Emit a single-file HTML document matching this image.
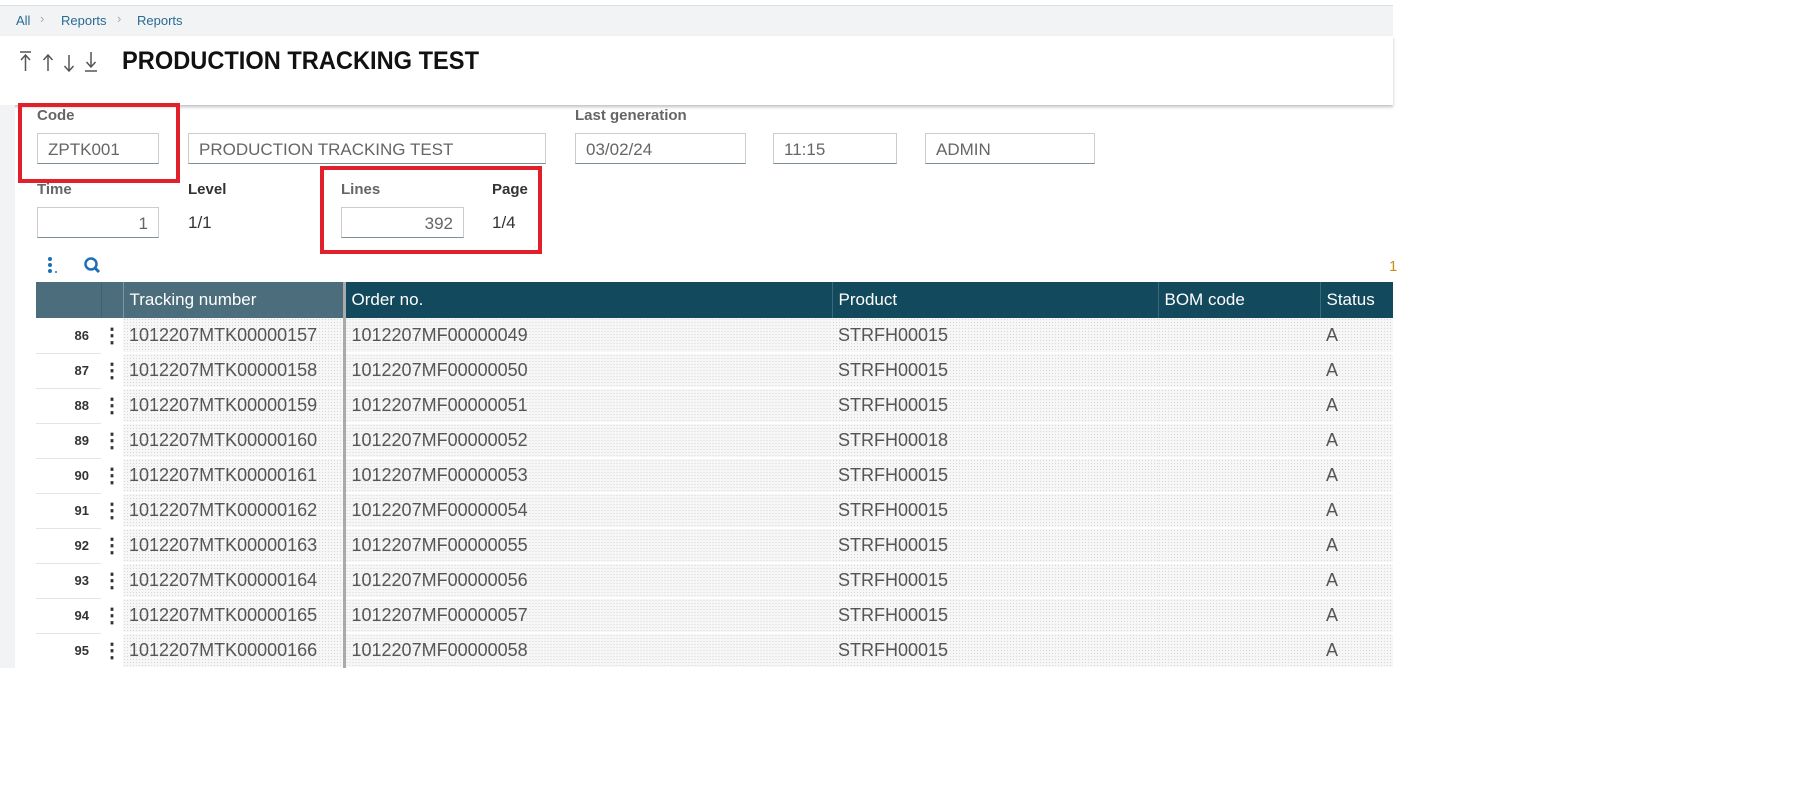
<!DOCTYPE html>
<html><head><meta charset="utf-8"><style>
*{margin:0;padding:0;box-sizing:border-box}
body{width:1803px;height:801px;background:#fff;font-family:"Liberation Sans",sans-serif;position:relative;overflow:hidden}
.a{position:absolute}
.bc{left:0;top:5px;width:1393px;height:31px;background:#f1f3f4;border-top:1px solid #dde0e2;font-size:13px;color:#2a6a93}
.hdr{left:0;top:36px;width:1393px;height:69px;background:#fff;box-shadow:0 2px 3px rgba(0,0,0,.25)}
.lbl{font-size:15px;font-weight:bold;color:#666}
.inp{border:1px solid #ccc;border-bottom:1px solid #7d8f99;height:31px;font-size:17px;color:#666;padding:6px 10px;background:#fff}
.red{border:4px solid #e0202a}
.val{font-size:17px;color:#333}
table{border-collapse:collapse;position:absolute;left:36px;top:282px;width:1357px;table-layout:fixed}
th{height:36px;background:#12495c;color:#fff;font-weight:normal;font-size:17px;text-align:left;padding-left:6px;border-right:1px solid #3a6a7a}
td{height:35px;font-size:18px;color:#555;padding-left:6px;white-space:nowrap;overflow:hidden;
background-color:#f7f7f7;background-image:radial-gradient(#d9d9d9 0.6px,transparent 0.8px);background-size:3px 3px;border-bottom:2px solid #fff}
td.n{background:#fff;border-bottom:1px solid #e4e4e4;font-size:13px;font-weight:bold;color:#333;text-align:right;padding-right:12px}
td.m{background:#fff;border-bottom:none;padding:0;text-align:center;font-weight:bold;font-size:20px;color:#333}
.dv{border-right:3px solid #aaa}
</style></head><body>
<div class="a bc"><span class="a" style="left:16px;top:7px">All</span><span class="a" style="left:40px;top:5px;color:#aaa">&#x203A;</span><span class="a" style="left:61px;top:7px">Reports</span><span class="a" style="left:117px;top:5px;color:#aaa">&#x203A;</span><span class="a" style="left:137px;top:7px">Reports</span></div>
<div class="a hdr">
<svg class="a" style="left:18px;top:13px" width="86" height="24" viewBox="0 0 86 24" fill="none" stroke="#555" stroke-width="1.5"><path d="M2 3h11M7.5 6v16M3 11l4.5-5 4.5 5"/><path d="M30 6v16M25.5 11l4.5-5 4.5 5"/><path d="M51 6v16M46.5 17l4.5 5 4.5-5"/><path d="M73 3v15M68.5 13l4.5 5 4.5-5M67 22h12"/></svg>
<div class="a" style="left:122px;top:11px;font-size:25px;font-weight:bold;color:#111;transform:scaleX(.945);transform-origin:left;white-space:nowrap">PRODUCTION TRACKING TEST</div>
</div>
<div class="a" style="left:0;top:105px;width:15px;height:563px;background:#f1f3f4"></div>
<div class="a lbl" style="left:37px;top:107px">Code</div>
<div class="a inp" style="left:37px;top:133px;width:122px">ZPTK001</div>
<div class="a red" style="left:18px;top:103px;width:162px;height:80px"></div>
<div class="a inp" style="left:188px;top:133px;width:358px">PRODUCTION TRACKING TEST</div>
<div class="a lbl" style="left:575px;top:107px">Last generation</div>
<div class="a inp" style="left:575px;top:133px;width:171px">03/02/24</div>
<div class="a inp" style="left:773px;top:133px;width:124px">11:15</div>
<div class="a inp" style="left:925px;top:133px;width:170px">ADMIN</div>
<div class="a lbl" style="left:37px;top:181px">Time</div>
<div class="a inp" style="left:37px;top:207px;width:122px;text-align:right">1</div>
<div class="a lbl" style="left:188px;top:181px;color:#333">Level</div>
<div class="a val" style="left:188px;top:213px">1/1</div>
<div class="a lbl" style="left:341px;top:181px">Lines</div>
<div class="a inp" style="left:341px;top:207px;width:123px;text-align:right">392</div>
<div class="a lbl" style="left:492px;top:181px;color:#333">Page</div>
<div class="a val" style="left:492px;top:213px">1/4</div>
<div class="a red" style="left:320px;top:166px;width:222px;height:88px"></div>
<svg class="a" style="left:44px;top:255px" width="70" height="22" viewBox="0 0 70 22"><circle cx="6" cy="4" r="2" fill="#1f6fb5"/><circle cx="6" cy="10" r="2" fill="#1f6fb5"/><circle cx="6" cy="16" r="2" fill="#1f6fb5"/><circle cx="12" cy="17" r="1" fill="#1f6fb5"/><circle cx="47" cy="9" r="5.5" fill="none" stroke="#1f6fb5" stroke-width="2.5"/><path d="M51 13l4 4" stroke="#1f6fb5" stroke-width="3"/></svg>
<div class="a" style="left:1389px;top:258px;font-size:15px;color:#c8901a">1</div>
<table>
<colgroup><col style="width:65px"><col style="width:22px"><col style="width:221px"><col style="width:488px"><col style="width:326px"><col style="width:162px"><col style="width:73px"></colgroup>
<tr><th style="background:#4b6d7c;border-right:1px solid #3e6070"></th><th style="background:#4b6d7c;border-right:1px solid #7b98a4"></th><th style="background:#4b6d7c;border-right:3px solid #aaa">Tracking number</th><th>Order no.</th><th>Product</th><th>BOM code</th><th style="border:none">Status</th></tr>
<tr><td class="n">86</td><td class="m">&#8942;</td><td class="dv">1012207MTK00000157</td><td>1012207MF00000049</td><td>STRFH00015</td><td></td><td>A</td></tr>
<tr><td class="n">87</td><td class="m">&#8942;</td><td class="dv">1012207MTK00000158</td><td>1012207MF00000050</td><td>STRFH00015</td><td></td><td>A</td></tr>
<tr><td class="n">88</td><td class="m">&#8942;</td><td class="dv">1012207MTK00000159</td><td>1012207MF00000051</td><td>STRFH00015</td><td></td><td>A</td></tr>
<tr><td class="n">89</td><td class="m">&#8942;</td><td class="dv">1012207MTK00000160</td><td>1012207MF00000052</td><td>STRFH00018</td><td></td><td>A</td></tr>
<tr><td class="n">90</td><td class="m">&#8942;</td><td class="dv">1012207MTK00000161</td><td>1012207MF00000053</td><td>STRFH00015</td><td></td><td>A</td></tr>
<tr><td class="n">91</td><td class="m">&#8942;</td><td class="dv">1012207MTK00000162</td><td>1012207MF00000054</td><td>STRFH00015</td><td></td><td>A</td></tr>
<tr><td class="n">92</td><td class="m">&#8942;</td><td class="dv">1012207MTK00000163</td><td>1012207MF00000055</td><td>STRFH00015</td><td></td><td>A</td></tr>
<tr><td class="n">93</td><td class="m">&#8942;</td><td class="dv">1012207MTK00000164</td><td>1012207MF00000056</td><td>STRFH00015</td><td></td><td>A</td></tr>
<tr><td class="n">94</td><td class="m">&#8942;</td><td class="dv">1012207MTK00000165</td><td>1012207MF00000057</td><td>STRFH00015</td><td></td><td>A</td></tr>
<tr><td class="n">95</td><td class="m">&#8942;</td><td class="dv">1012207MTK00000166</td><td>1012207MF00000058</td><td>STRFH00015</td><td></td><td>A</td></tr>
</table>
<div class="a" style="left:0;top:668px;width:1803px;height:133px;background:#fff"></div>
</body></html>
